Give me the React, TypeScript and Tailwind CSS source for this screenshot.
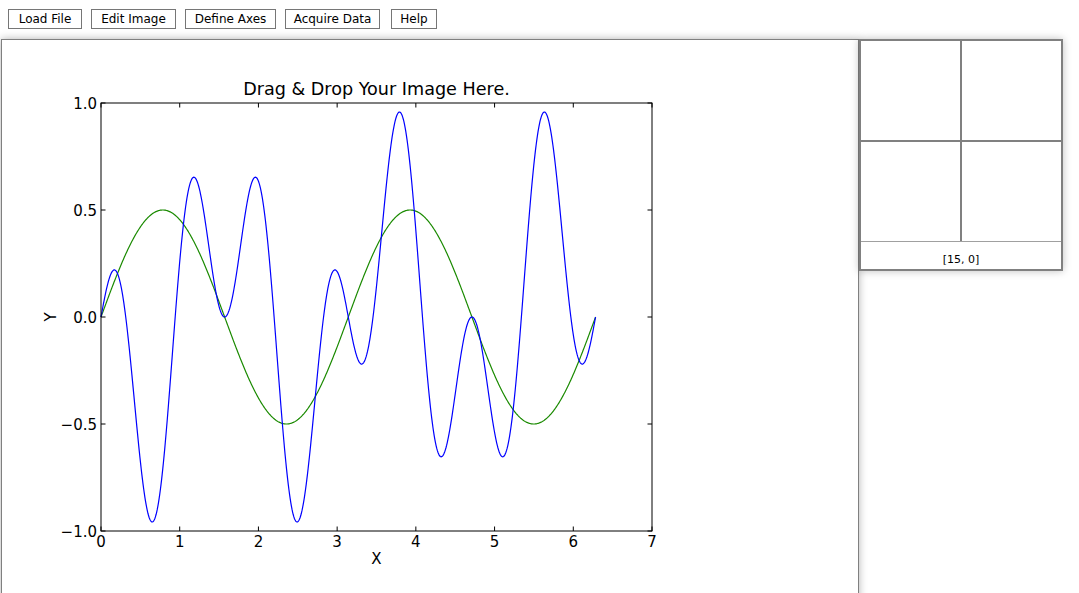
import React from "react";

const X = (x: number) => 101 + (x * 551) / 7;
const Y = (y: number) => 317 - y * 214;

function makePath(f: (t: number) => number) {
  const N = 800;
  const pts: string[] = [];
  for (let i = 0; i <= N; i++) {
    const t = (i / N) * 2 * Math.PI;
    pts.push(`${i === 0 ? "M" : "L"}${X(t).toFixed(2)},${Y(f(t)).toFixed(2)}`);
  }
  return pts.join(" ");
}

const bluePath = makePath((t) => Math.sin(2 * t) * Math.cos(5 * t));
const greenPath = makePath((t) => 0.5 * Math.sin(2 * t));

const xTicks = [0, 1, 2, 3, 4, 5, 6, 7];
const yTicks: [number, string][] = [
  [1, "1.0"],
  [0.5, "0.5"],
  [0, "0.0"],
  [-0.5, "\u22120.5"],
  [-1, "\u22121.0"],
];

const FONT = "'DejaVu Sans', 'Liberation Sans', sans-serif";

function Plot() {
  return (
    <svg width={856} height={560} viewBox="2 40 856 560" className="block">
      <text x={376.5} y={94.5} textAnchor="middle" fontSize={17.6} fontFamily={FONT} fill="#000">
        Drag &amp; Drop Your Image Here.
      </text>
      <path d={greenPath} fill="none" stroke="#1a8a00" strokeWidth={1.2} />
      <path d={bluePath} fill="none" stroke="#0000ff" strokeWidth={1.2} />
      <rect x={101} y={103} width={551} height={428} fill="none" stroke="#000" strokeWidth={1} />
      {xTicks.map((k) => (
        <g key={"x" + k}>
          <line x1={X(k)} y1={531} x2={X(k)} y2={526.5} stroke="#000" strokeWidth={1} />
          <line x1={X(k)} y1={103} x2={X(k)} y2={107.5} stroke="#000" strokeWidth={1} />
          <text x={X(k)} y={547} textAnchor="middle" fontSize={15} fontFamily={FONT} fill="#000">
            {k}
          </text>
        </g>
      ))}
      {yTicks.map(([v, label]) => (
        <g key={"y" + label}>
          <line x1={101} y1={Y(v)} x2={105.5} y2={Y(v)} stroke="#000" strokeWidth={1} />
          <line x1={652} y1={Y(v)} x2={647.5} y2={Y(v)} stroke="#000" strokeWidth={1} />
          <text x={97} y={Y(v) + 5.5} textAnchor="end" fontSize={15} fontFamily={FONT} fill="#000">
            {label}
          </text>
        </g>
      ))}
      <text x={376.5} y={564} textAnchor="middle" fontSize={15} fontFamily={FONT} fill="#000">
        X
      </text>
      <text
        x={0}
        y={0}
        transform="translate(55.5,317) rotate(-90)"
        textAnchor="middle"
        fontSize={15}
        fontFamily={FONT}
        fill="#000"
      >
        Y
      </text>
    </svg>
  );
}

const btn =
  "h-[20px] border border-[#767676] bg-white text-[12px] text-black flex items-center justify-center leading-none";

export default function App() {
  return (
    <div className="w-[1079px] h-[593px] overflow-hidden bg-white font-['DejaVu_Sans','Liberation_Sans',sans-serif]">
      <div className="flex gap-[9px] pl-[8px] pt-[9px] h-[39px]">
        <button className={`${btn} w-[74px]`}>Load File</button>
        <button className={`${btn} w-[85px]`}>Edit Image</button>
        <button className={`${btn} w-[91px]`}>Define Axes</button>
        <button className={`${btn} w-[95px]`}>Acquire Data</button>
        <button className={`${btn} w-[46px] ml-[2px]`}>Help</button>
      </div>
      <div className="flex items-start pl-[1px]">
        <div className="w-[858px] h-[600px] border border-[#808080] bg-white shadow-[0_0_8px_rgba(0,0,0,0.3)]">
          <Plot />
        </div>
        <div className="w-[204px] border-2 border-[#808080] bg-white shadow-[0_0_8px_rgba(0,0,0,0.25)]">
          <div className="grid grid-cols-[101px_99px] grid-rows-[101px_99px] w-[200px] h-[200px]">
            <div className="border-r-2 border-b-2 border-[#808080]" />
            <div className="border-b-2 border-[#808080]" />
            <div className="border-r-2 border-[#808080]" />
            <div />
          </div>
          <div className="h-[28px] border-t border-[#a0a0a0] pt-[10px] text-center text-[11px] leading-[16px] text-black">
            [15, 0]
          </div>
        </div>
      </div>
    </div>
  );
}
